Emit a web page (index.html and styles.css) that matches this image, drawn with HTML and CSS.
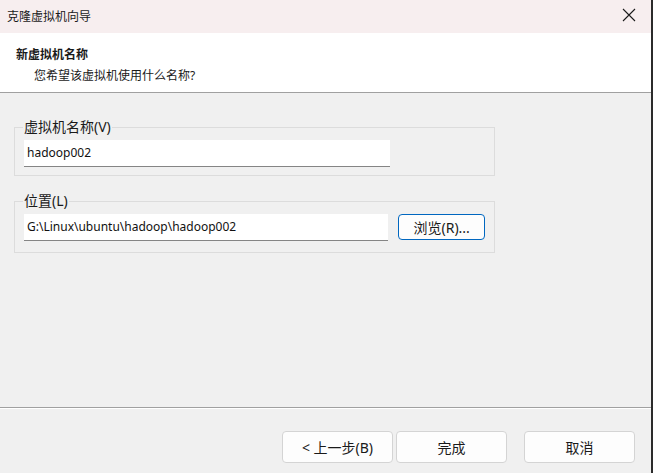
FILE: index.html
```html
<!DOCTYPE html>
<html lang="zh-CN">
<head>
    <meta charset="UTF-8">
    <meta name="viewport" content="width=device-width, initial-scale=1.0">
    <title>克隆虚拟机向导</title>
    <link rel="stylesheet" href="styles.css">
</head>
<body>
    <div class="window">
        <div class="titlebar">
            <span class="title">克隆虚拟机向导</span>
            <svg class="close" width="14" height="14" viewBox="0 0 14 14">
                <path d="M1 1 L13 13 M13 1 L1 13" stroke="#1a1a1a" stroke-width="1.1" fill="none"/>
            </svg>
        </div>

        <div class="header">
            <div class="header-title">新虚拟机名称</div>
            <div class="header-sub">您希望该虚拟机使用什么名称?</div>
        </div>

        <div class="content">
            <fieldset class="group group-name">
                <legend>虚拟机名称(V)</legend>
                <input type="text" class="field" value="hadoop002">
            </fieldset>

            <fieldset class="group group-location">
                <legend>位置(L)</legend>
                <div class="row">
                    <input type="text" class="field" value="G:\Linux\ubuntu\hadoop\hadoop002">
                    <button class="btn btn-browse">浏览(R)...</button>
                </div>
            </fieldset>
        </div>

        <div class="footer">
            <button class="btn btn-nav">&lt; 上一步(B)</button>
            <button class="btn btn-nav">完成</button>
            <button class="btn btn-nav btn-cancel">取消</button>
        </div>
    </div>
</body>
</html>
```

FILE: styles.css
```css
* {
    box-sizing: border-box;
}
body {
    margin: 0;
    width: 653px;
    height: 473px;
    overflow: hidden;
    background-color: #2b2b2b;
    font-family: "Noto Sans", "Noto Sans CJK SC", sans-serif;
    font-size: 12px;
    color: #1a1a1a;
}
.window {
    width: 651px;
    height: 473px;
    display: flex;
    flex-direction: column;
    background-color: #f0f0f0;
}
.titlebar {
    height: 33px;
    flex-shrink: 0;
    display: flex;
    align-items: center;
    justify-content: space-between;
    padding: 0 15px 0 7px;
    background-color: #f7eeef;
}
.title {
    margin-top: -2px;
}
.close {
    margin-top: -3px;
}
.header {
    height: 60px;
    flex-shrink: 0;
    padding: 12px 16px 0;
    background-color: #fff;
    border-bottom: 1px solid #a0a0a0;
    line-height: 20px;
}
.header-title {
    font-weight: bold;
}
.header-sub {
    padding-left: 18px;
    margin-top: 1px;
}
.content {
    flex: 1;
    padding: 26px 0 0 14px;
    border-bottom: 1px solid #a0a0a0;
}
.group {
    width: 481px;
    margin: 0;
    padding: 5px 9px 8px;
    border: 1px solid #dcdcdc;
    min-inline-size: 0;
}
.group legend {
    padding: 0 1px;
    margin-left: -1px;
    font-size: 14px;
    line-height: 16px;
}
.group-location {
    margin-top: 17px;
    padding-bottom: 11px;
}
.field {
    display: block;
    width: 366px;
    height: 27px;
    margin: 0;
    padding: 0 3px 1px;
    border: none;
    border-bottom: 1px solid #858585;
    background-color: #fff;
    font: inherit;
    color: #111;
    outline: none;
}
.row {
    display: flex;
    gap: 10px;
}
.btn {
    font-family: inherit;
    font-size: 14px;
    color: #1a1a1a;
    background-color: #fdfdfd;
    border: 1px solid #d4d4d4;
    border-radius: 4px;
    padding: 0;
}
.btn-browse {
    width: 87px;
    height: 26px;
    border: 1px solid #0067c0;
}
.footer {
    height: 65px;
    flex-shrink: 0;
    display: flex;
    align-items: flex-start;
    gap: 3px;
    padding: 22px 0 0 282px;
    border-top: 1px solid #fff;
}
.btn-nav {
    width: 111px;
    height: 32px;
}
.btn-cancel {
    margin-left: 14px;
    width: 111px;
}
```
